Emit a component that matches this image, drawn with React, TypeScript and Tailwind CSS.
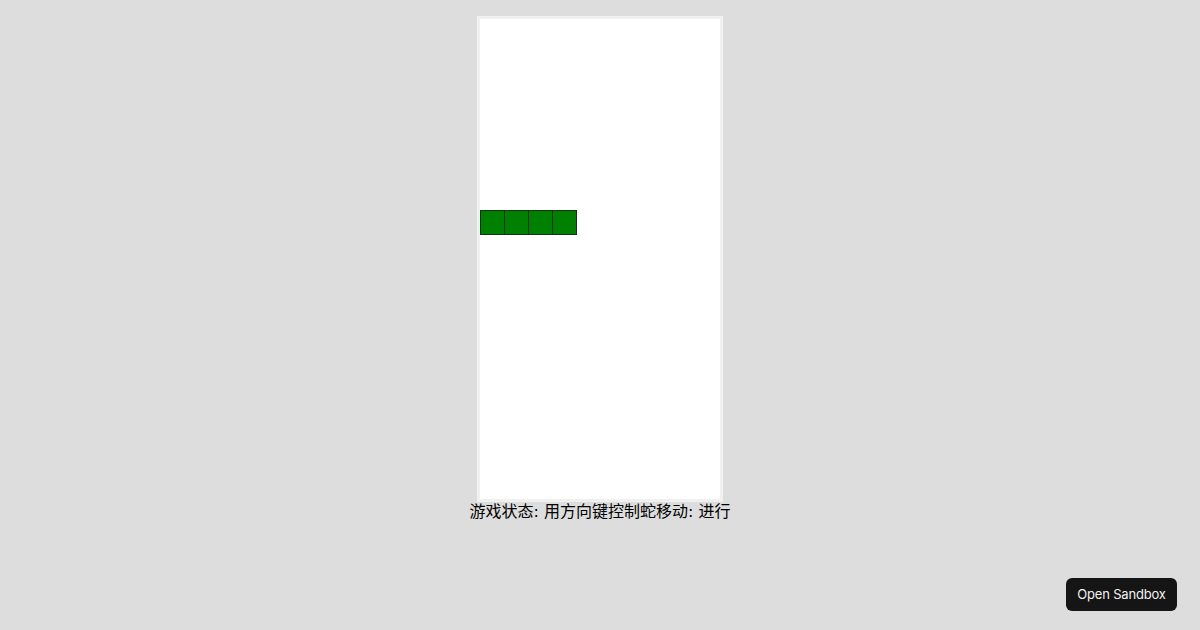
import { useState } from 'react';

const CELL = 24;

export default function App() {
    // snake segments in grid cells; head is the last one
    const [snake] = useState([
        { x: 0, y: 8 },
        { x: 1, y: 8 },
        { x: 2, y: 8 },
        { x: 3, y: 8 },
    ]);

    return (
        <div className="min-h-screen bg-[#dddddd] flex flex-col items-center pt-4 font-['DejaVu_Sans','Noto_Sans_CJK_SC',sans-serif]">
            {/* Board */}
            <div className="border-[3px] border-[#f0f0f0] bg-white">
                <div className="relative w-[240px] h-[480px]">
                    {snake.map((s, i) => (
                        <div
                            key={i}
                            className="absolute w-[25px] h-[25px] bg-[#008000] border border-[#183018]"
                            style={{ left: s.x * CELL, top: s.y * CELL - 1 }}
                        />
                    ))}
                </div>
            </div>

            <p className="text-base leading-[18px] text-black mt-[1px]">
                游戏状态: 用方向键控制蛇移动: 进行
            </p>

            {/* sandbox link */}
            <button className="fixed right-[23px] bottom-[19px] w-[111px] h-[33px] rounded-md bg-[#151515] text-[#f2f2f2] text-[13px] tracking-[-0.2px] font-['Inter',sans-serif]">
                Open Sandbox
            </button>
        </div>
    );
}
